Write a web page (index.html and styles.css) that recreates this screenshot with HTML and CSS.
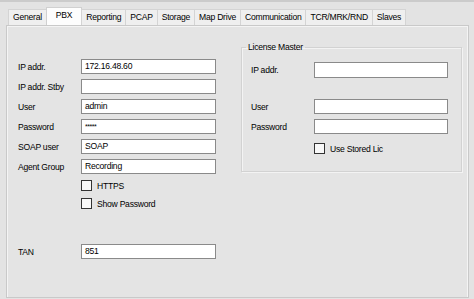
FILE: index.html
```html
<!DOCTYPE html>
<html>
<head>
<meta charset="utf-8">
<link rel="stylesheet" href="styles.css">
</head>
<body>
<div class="topbar"></div>
<div class="tabs">
  <div class="tab">General</div>
  <div class="tab active">PBX</div>
  <div class="tab">Reporting</div>
  <div class="tab">PCAP</div>
  <div class="tab">Storage</div>
  <div class="tab">Map Drive</div>
  <div class="tab">Communication</div>
  <div class="tab">TCR/MRK/RND</div>
  <div class="tab">Slaves</div>
</div>
<div class="panel">
  <div class="left">
    <div class="form">
      <span class="label">IP addr.</span><div class="input">172.16.48.60</div>
      <span class="label">IP addr. Stby</span><div class="input"></div>
      <span class="label">User</span><div class="input">admin</div>
      <span class="label">Password</span><div class="input pw">*****</div>
      <span class="label">SOAP user</span><div class="input">SOAP</div>
      <span class="label">Agent Group</span><div class="input">Recording</div>
    </div>
    <div class="checks">
      <div class="check"><span class="box"></span>HTTPS</div>
      <div class="check"><span class="box"></span>Show Password</div>
    </div>
    <div class="form tan">
      <span class="label">TAN</span><div class="input">851</div>
    </div>
  </div>
  <fieldset class="group">
    <legend>License Master</legend>
    <div class="row r-ip"><span class="label">IP addr.</span><div class="input tall"></div></div>
    <div class="row r-user"><span class="label">User</span><div class="input"></div></div>
    <div class="row r-pw"><span class="label">Password</span><div class="input"></div></div>
    <div class="check rcheck"><span class="box"></span>Use Stored Lic</div>
  </fieldset>
</div>
</body>
</html>
```
FILE: styles.css
```css
html, body {
  margin: 0;
  padding: 0;
}
body {
  background: #e3e3e3;
  font-family: "Liberation Sans", Arial, sans-serif;
  font-size: 8.6px;
  letter-spacing: -0.25px;
  color: #000;
  width: 474px;
  height: 299px;
  overflow: hidden;
}
.topbar {
  height: 2px;
  background: #cbcbcb;
}
.tabs {
  display: flex;
  align-items: flex-end;
  height: 18px;
  margin: 5px 0 0 8px;
  position: relative;
  z-index: 1;
}
.tab {
  box-sizing: border-box;
  height: 16px;
  line-height: 15px;
  padding: 0 4px;
  border: 1px solid #d4d4d4;
  border-bottom: none;
  background: #efefef;
  margin-right: -1px;
  white-space: nowrap;
}
.tab.active {
  height: 18px;
  line-height: 14px;
  background: #fdfdfd;
  padding: 0 9px;
  border-color: #d0d0d0;
}
.panel {
  box-sizing: border-box;
  margin: 0 0 0 6px;
  width: 463px;
  height: 273px;
  border: 1px solid #c9c9c9;
  box-shadow: inset 1px 1px 0 #f4f4f4, inset -1px 0 0 #f4f4f4;
  background: #e4e4e4;
  display: flex;
  align-items: flex-start;
  padding: 0 0 0 11px;
}
.left {
  width: 198px;
  display: flex;
  flex-direction: column;
  padding-top: 33px;
}
.form {
  display: grid;
  grid-template-columns: 63px 135px;
  grid-auto-rows: 15px;
  row-gap: 5px;
  align-items: center;
}
.label {
  white-space: nowrap;
}
.input {
  box-sizing: border-box;
  height: 15px;
  border: 1px solid #8a8a8a;
  background: #fff;
  padding-left: 3px;
  line-height: 13px;
  white-space: nowrap;
}
.input.tall {
  height: 16px;
}
.input.pw {
  font-size: 7px;
  letter-spacing: -0.5px;
}
.checks {
  display: flex;
  flex-direction: column;
  gap: 7px;
  margin: 6px 0 0 63px;
}
.check {
  display: flex;
  align-items: center;
  gap: 5px;
  height: 11px;
  white-space: nowrap;
}
.box {
  box-sizing: border-box;
  width: 11px;
  height: 11px;
  border: 1px solid #333;
  background: #f8f8f8;
}
.tan {
  margin-top: 35px;
}
.group {
  box-sizing: border-box;
  margin: 16px 0 0 25px;
  padding: 0 9px 17px 9px;
  width: 221px;
  min-width: 0;
  border: 1px solid #d2d2d2;
  box-shadow: 1px 1px 0 #f3f3f3, inset 1px 1px 0 #f3f3f3;
}
.group legend {
  padding: 0 2px;
  margin-left: -5px;
  line-height: 10px;
}
.row {
  display: grid;
  grid-template-columns: 63px 134px;
  align-items: center;
}
.r-ip {
  margin-top: 10px;
}
.r-user {
  margin-top: 21px;
}
.r-pw {
  margin-top: 5px;
}
.rcheck {
  margin: 9px 0 0 63px;
}
```
